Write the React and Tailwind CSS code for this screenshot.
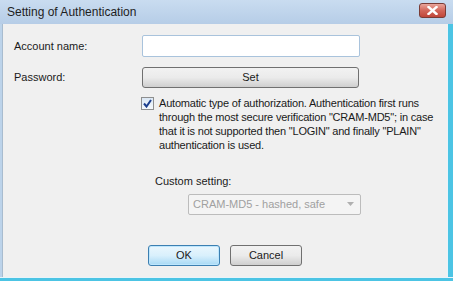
import React from 'react';

export default function App() {
  return (
    <div className="w-[453px] h-[281px] flex flex-col bg-[#bcd3ea] overflow-hidden font-['Liberation_Sans',Arial,sans-serif] text-[11px] text-black">
      {/* Title bar */}
      <div className="h-[24px] shrink-0 flex items-center justify-between pl-[7px] pr-[7px] bg-gradient-to-b from-[#c9dcf0] to-[#b6cde7]">
        <span className="text-[12px] text-[#1e1e1e] -mt-[1px]">Setting of Authentication</span>
        <div className="w-[27px] h-[15px] -mt-[3px] rounded-[3px] border border-[#7a3c36] bg-gradient-to-b from-[#e8a59c] via-[#d2665a] to-[#c0463a] flex items-center justify-center">
          <svg width="11" height="9" viewBox="0 0 11 9">
            <path d="M1.5 1 L9.5 8 M9.5 1 L1.5 8" stroke="#fff" strokeWidth="2.4" strokeLinecap="square" />
          </svg>
        </div>
      </div>

      {/* Client area */}
      <div className="flex-1 flex min-h-0">
        <div className="w-[3px] bg-[#bcd3ea] border-r border-[#a8bccf]" />
        <div className="flex-1 bg-[#f0f0f0] flex flex-col pt-[11px]">
          <div className="flex items-center h-[22px]">
            <span className="w-[139px] pl-[11px] text-[#1a1a1a]">Account name:</span>
            <div className="w-[218px] h-[22px] bg-white border border-[#a9c3dc] rounded-[2px]" />
          </div>
          <div className="flex items-center h-[21px] mt-[10px]">
            <span className="w-[139px] pl-[11px] text-[#1a1a1a]">Password:</span>
            <button className="w-[217px] h-[21px] rounded-[3px] border border-[#707070] bg-gradient-to-b from-[#f2f2f2] via-[#ebebeb] to-[#cfcfcf] text-[#1a1a1a]">Set</button>
          </div>

          <div className="flex mt-[8px] pl-[138px]">
            <div className="w-[13px] h-[13px] mt-[1px] border border-[#8e8f8f] bg-gradient-to-b from-[#dbe8f5] to-[#f5f9fd] flex items-center justify-center shrink-0">
              <svg width="9" height="9" viewBox="0 0 9 9">
                <path d="M1 4.5 L3.5 7.5 L8 1" stroke="#1c3f8e" strokeWidth="2" fill="none" />
              </svg>
            </div>
            <p className="ml-[5px] w-[275px] leading-[14px] tracking-[-0.2px] text-[#1a1a1a]">
              Automatic type of authorization. Authentication first runs through the most secure verification "CRAM-MD5"; in case that it is not supported then "LOGIN" and finally "PLAIN" authentication is used.
            </p>
          </div>

          <div className="pl-[152px] mt-[21px] text-[#1a1a1a]">Custom setting:</div>
          <div className="pl-[185px] mt-[4px]">
            <div className="w-[173px] h-[21px] border border-[#bcbcbc] rounded-[2px] bg-[#f4f4f4] flex items-center justify-between pl-[4px] pr-[6px] text-[#a0a0a0]">
              <span>CRAM-MD5 - hashed, safe</span>
              <svg width="7" height="4" viewBox="0 0 7 4"><path d="M0 0 H7 L3.5 4 Z" fill="#b0b0b0" /></svg>
            </div>
          </div>

          <div className="flex gap-[10px] pl-[145px] mt-[30px]">
            <button className="w-[72px] h-[21px] rounded-[3px] border border-[#3c7fb1] bg-gradient-to-b from-[#eaf6fd] via-[#d9f0fc] to-[#a7d9f5] shadow-[inset_0_0_0_1px_#bde6fd] text-[#1a1a1a]">OK</button>
            <button className="w-[72px] h-[21px] rounded-[3px] border border-[#707070] bg-gradient-to-b from-[#f2f2f2] via-[#ebebeb] to-[#cfcfcf] text-[#1a1a1a]">Cancel</button>
          </div>
        </div>
        <div className="w-[6px] border-l border-[#e8f4fa] bg-[#4cc4e4]" />
      </div>
      <div className="h-[4px] shrink-0 border-t border-[#e8f4fa] bg-[#4cc4e4]" />
    </div>
  );
}
